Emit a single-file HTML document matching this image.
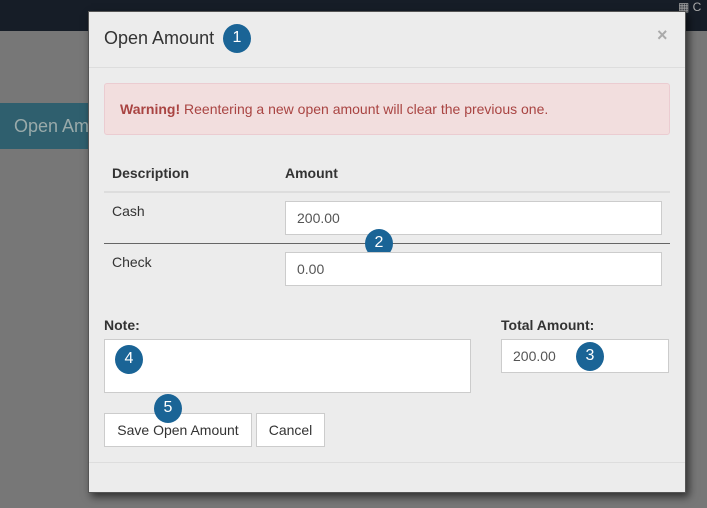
<!DOCTYPE html>
<html><head><style>
*{box-sizing:border-box;margin:0;padding:0}
body{width:707px;height:508px;overflow:hidden;background:#777;font-family:"Liberation Sans",Arial,sans-serif;position:relative;font-size:14px;color:#333}
.nav{position:absolute;left:0;top:0;width:707px;height:31px;background:#161d27}
.side{position:absolute;left:0;top:103px;width:100px;height:46px;background:#2f5f6e;color:#9aa;font-size:18px;padding:13px 0 0 14px}
.modal{position:absolute;left:88px;top:11px;width:598px;height:482px;background:#ececec;border:1px solid #555;box-shadow:3px 4px 8px rgba(0,0,0,.6)}
.a{position:absolute}
.badge{position:absolute;width:28px;height:29px;border-radius:50%;background:#1a6496;color:#fff;font-size:16px;text-align:center;line-height:28px}
.inp{position:absolute;background:#fff;border:1px solid #ccc;font-size:14px;color:#555;padding-left:11px}
.btn{position:absolute;background:#fff;border:1px solid #ccc;font-size:14px;color:#333;text-align:center;line-height:32px}
</style></head><body>
<div class="nav"><div class="a" style="left:678px;top:0;color:#aaa;font-size:12px">▦ C</div></div>
<div class="side">Open Am</div>
<div class="modal">
<div class="a" style="left:15px;top:16px;font-size:18px;color:#333">Open Amount</div>
<div class="badge" style="left:134px;top:12px">1</div>
<div class="a" style="left:568px;top:13px;font-size:18px;color:#aaa;font-weight:bold">×</div>
<div class="a" style="left:0;top:55px;width:596px;border-top:1px solid #ddd"></div>
<div class="a" style="left:15px;top:71px;width:566px;height:52px;background:#f2dede;border:1px solid #ebccd1;border-radius:3px;color:#a94442;padding:17px 0 0 15px;font-size:14px"><b>Warning!</b> Reentering a new open amount will clear the previous one.</div>
<div class="a" style="left:23px;top:153px;font-weight:bold">Description</div>
<div class="a" style="left:196px;top:153px;font-weight:bold">Amount</div>
<div class="a" style="left:15px;top:179px;width:566px;border-top:2px solid #ddd"></div>
<div class="a" style="left:23px;top:191px">Cash</div>
<div class="inp" style="left:196px;top:189px;width:377px;height:34px;line-height:32px">200.00</div>
<div class="a" style="left:15px;top:231px;width:566px;border-top:1px solid #666"></div>
<div class="badge" style="left:276px;top:217px">2</div>
<div class="a" style="left:23px;top:242px">Check</div>
<div class="inp" style="left:196px;top:240px;width:377px;height:34px;line-height:32px">0.00</div>
<div class="a" style="left:15px;top:305px;font-weight:bold">Note:</div>
<div class="inp" style="left:15px;top:327px;width:367px;height:54px"></div>
<div class="badge" style="left:26px;top:333px">4</div>
<div class="a" style="left:412px;top:305px;font-weight:bold">Total Amount:</div>
<div class="inp" style="left:412px;top:327px;width:168px;height:34px;line-height:32px">200.00</div>
<div class="badge" style="left:487px;top:330px">3</div>
<div class="btn" style="left:15px;top:401px;width:148px;height:34px">Save Open Amount</div>
<div class="badge" style="left:65px;top:382px">5</div>
<div class="btn" style="left:167px;top:401px;width:69px;height:34px">Cancel</div>
<div class="a" style="left:0;top:450px;width:596px;border-top:1px solid #ddd"></div>
</div>
</body></html>
